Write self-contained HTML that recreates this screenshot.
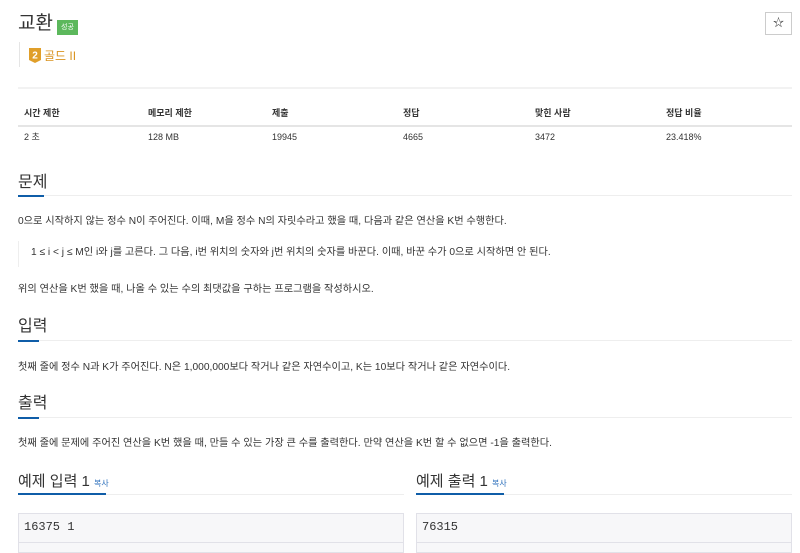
<!DOCTYPE html>
<html><head><meta charset="utf-8"><style>
*{margin:0;padding:0;box-sizing:border-box}
body{width:800px;height:548px;overflow:hidden;background:#fff;font-family:"Liberation Sans","Noto Sans CJK KR",sans-serif;color:#333;position:relative}
.a{position:absolute;white-space:nowrap;line-height:1}
.p{font-size:10.2px;color:#333}
.h{font-size:16px;color:#333}
.th{font-size:9px;font-weight:bold;color:#333}
.td{font-size:9px;color:#333}
.line{position:absolute;height:1px;background:#eee}
.blue{position:absolute;height:2px;background:#0f5da8}
</style></head><body>
<div class="a" style="left:18px;top:14px;font-size:19px;color:#333">교환</div>
<div class="a" style="left:57px;top:20px;width:21px;height:15px;background:#5cb85c;color:#fff;font-size:7px;line-height:15px;text-align:center">성공</div>
<div style="position:absolute;left:19px;top:42px;width:1px;height:25px;background:#e5e5e5"></div>
<svg style="position:absolute;left:29px;top:48px" width="12" height="16" viewBox="0 0 12 16"><path d="M0 0H12V12L6 15L0 12Z" fill="#e09f2a"/><text x="6" y="10.5" font-size="10" font-weight="bold" fill="#fff" text-anchor="middle" font-family="Liberation Sans">2</text></svg>
<div class="a" style="left:44px;top:50px;font-size:12px;color:#d9931f">골드 II</div>
<div style="position:absolute;left:765px;top:12px;width:27px;height:23px;border:1px solid #ccc;font-size:11px;text-align:center;line-height:21px;color:#333">☆</div>
<div class="line" style="left:18px;top:87px;width:774px;height:2px;background:#f2f2f2"></div>
<div class="a th" style="left:24px;top:109px">시간 제한</div>
<div class="a th" style="left:148px;top:109px">메모리 제한</div>
<div class="a th" style="left:272px;top:109px">제출</div>
<div class="a th" style="left:403px;top:109px">정답</div>
<div class="a th" style="left:535px;top:109px">맞힌 사람</div>
<div class="a th" style="left:666px;top:109px">정답 비율</div>
<div class="line" style="left:18px;top:125px;width:774px;height:2px;background:#e5e5e5"></div>
<div class="a td" style="left:24px;top:133px">2 초</div>
<div class="a td" style="left:148px;top:133px">128 MB</div>
<div class="a td" style="left:272px;top:133px">19945</div>
<div class="a td" style="left:403px;top:133px">4665</div>
<div class="a td" style="left:535px;top:133px">3472</div>
<div class="a td" style="left:666px;top:133px">23.418%</div>

<div class="a h" style="left:18px;top:175px">문제</div>
<div class="line" style="left:18px;top:195px;width:774px"></div><div class="blue" style="left:18px;top:195px;width:26px"></div>
<div class="a p" style="left:18px;top:217px">0으로 시작하지 않는 정수 N이 주어진다. 이때, M을 정수 N의 자릿수라고 했을 때, 다음과 같은 연산을 K번 수행한다.</div>
<div style="position:absolute;left:18px;top:241px;width:1px;height:26px;background:#eee"></div>
<div class="a p" style="left:31px;top:248px">1 ≤ i &lt; j ≤ M인 i와 j를 고른다. 그 다음, i번 위치의 숫자와 j번 위치의 숫자를 바꾼다. 이때, 바꾼 수가 0으로 시작하면 안 된다.</div>
<div class="a p" style="left:18px;top:285px">위의 연산을 K번 했을 때, 나올 수 있는 수의 최댓값을 구하는 프로그램을 작성하시오.</div>

<div class="a h" style="left:18px;top:319px">입력</div>
<div class="line" style="left:18px;top:340px;width:774px"></div><div class="blue" style="left:18px;top:340px;width:21px"></div>
<div class="a p" style="left:18px;top:363px">첫째 줄에 정수 N과 K가 주어진다. N은 1,000,000보다 작거나 같은 자연수이고, K는 10보다 작거나 같은 자연수이다.</div>

<div class="a h" style="left:18px;top:396px">출력</div>
<div class="line" style="left:18px;top:417px;width:774px"></div><div class="blue" style="left:18px;top:417px;width:21px"></div>
<div class="a p" style="left:18px;top:439px">첫째 줄에 문제에 주어진 연산을 K번 했을 때, 만들 수 있는 가장 큰 수를 출력한다. 만약 연산을 K번 할 수 없으면 -1을 출력한다.</div>

<div class="a h" style="left:18px;top:474px;font-size:15px">예제 입력 1 <span style="font-size:8px;color:#2a6ebb">복사</span></div>
<div class="line" style="left:18px;top:494px;width:386px"></div><div class="blue" style="left:18px;top:493px;width:88px"></div>
<div class="a h" style="left:416px;top:474px;font-size:15px">예제 출력 1 <span style="font-size:8px;color:#2a6ebb">복사</span></div>
<div class="line" style="left:416px;top:494px;width:376px"></div><div class="blue" style="left:416px;top:493px;width:88px"></div>

<div style="position:absolute;left:18px;top:513px;width:386px;height:40px;background:#f7f7f9;border:1px solid #e1e1e8"></div>
<div style="position:absolute;left:19px;top:542px;width:384px;height:1px;background:#e1e1e8"></div>
<div class="a" style="left:24px;top:521px;font-size:12px;font-family:'Liberation Mono',monospace;color:#333">16375 1</div>
<div style="position:absolute;left:416px;top:513px;width:376px;height:40px;background:#f7f7f9;border:1px solid #e1e1e8"></div>
<div style="position:absolute;left:417px;top:542px;width:374px;height:1px;background:#e1e1e8"></div>
<div class="a" style="left:422px;top:521px;font-size:12px;font-family:'Liberation Mono',monospace;color:#333">76315</div>
</body></html>
